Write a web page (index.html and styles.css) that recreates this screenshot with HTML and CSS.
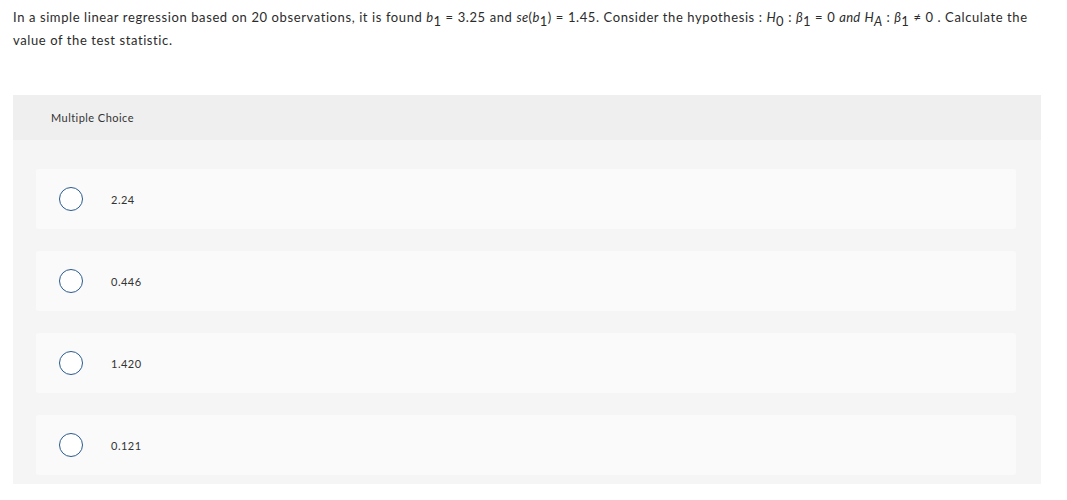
FILE: index.html
```html
<!DOCTYPE html>
<html>
<head>
<meta charset="utf-8">
<link rel="stylesheet" href="styles.css">
</head>
<body>
<div class="page">
  <p class="question">In a simple linear regression based on 20 observations, it is found <i>b</i><sub>1</sub> = 3.25 and <i>se</i>(<i>b</i><sub>1</sub>) = 1.45. Consider the hypothesis : <i>H</i><sub>0</sub> : <i>β</i><sub>1</sub> = 0 <i>and</i> <i>H</i><sub><i>A</i></sub> : <i>β</i><sub>1</sub> ≠ 0 . Calculate the value of the test statistic.</p>
  <div class="mc">
    <div class="mc-head">Multiple Choice</div>
    <div class="mc-body">
      <div class="opt"><span class="radio"></span><span class="label">2.24</span></div>
      <div class="opt"><span class="radio"></span><span class="label">0.446</span></div>
      <div class="opt"><span class="radio"></span><span class="label">1.420</span></div>
      <div class="opt"><span class="radio"></span><span class="label">0.121</span></div>
    </div>
  </div>
</div>
</body>
</html>
```
FILE: styles.css
```css
html, body { margin: 0; padding: 0; background: #fff; }
body { font-family: Lato, "Open Sans", sans-serif; color: #333; }
.page { padding: 6px 10px 0 13px; }
.question {
  margin: 0;
  font-size: 13px;
  line-height: 23px;
  letter-spacing: 0.6px;
  color: #2b2b2b;
  max-width: 1040px;
}
.question sub { font-size: 13px; vertical-align: -4px; line-height: 0; }
.question i { font-style: italic; letter-spacing: 0.3px; }
.mc {
  margin-top: 43px;
  background: #f5f5f5;
  width: 1028px;
}
.mc-head {
  background: #efefef;
  height: 45px;
  display: flex;
  align-items: center;
  padding-left: 38px;
  font-size: 11px;
  letter-spacing: 0.45px;
  color: #333;
}
.mc-body {
  padding: 29px 25px 9px 23px;
  display: flex;
  flex-direction: column;
  gap: 22px;
}
.opt {
  background: #fafafa;
  height: 60px;
  border-radius: 3px;
  display: flex;
  align-items: center;
  padding-left: 23px;
}
.radio {
  width: 22px;
  height: 22px;
  border: 1.5px solid #2a5a90;
  border-radius: 50%;
  background: #fff;
  flex: none;
}
.label {
  margin-left: 28px;
  font-size: 11px;
  letter-spacing: 0.5px;
  color: #333;
}
```
